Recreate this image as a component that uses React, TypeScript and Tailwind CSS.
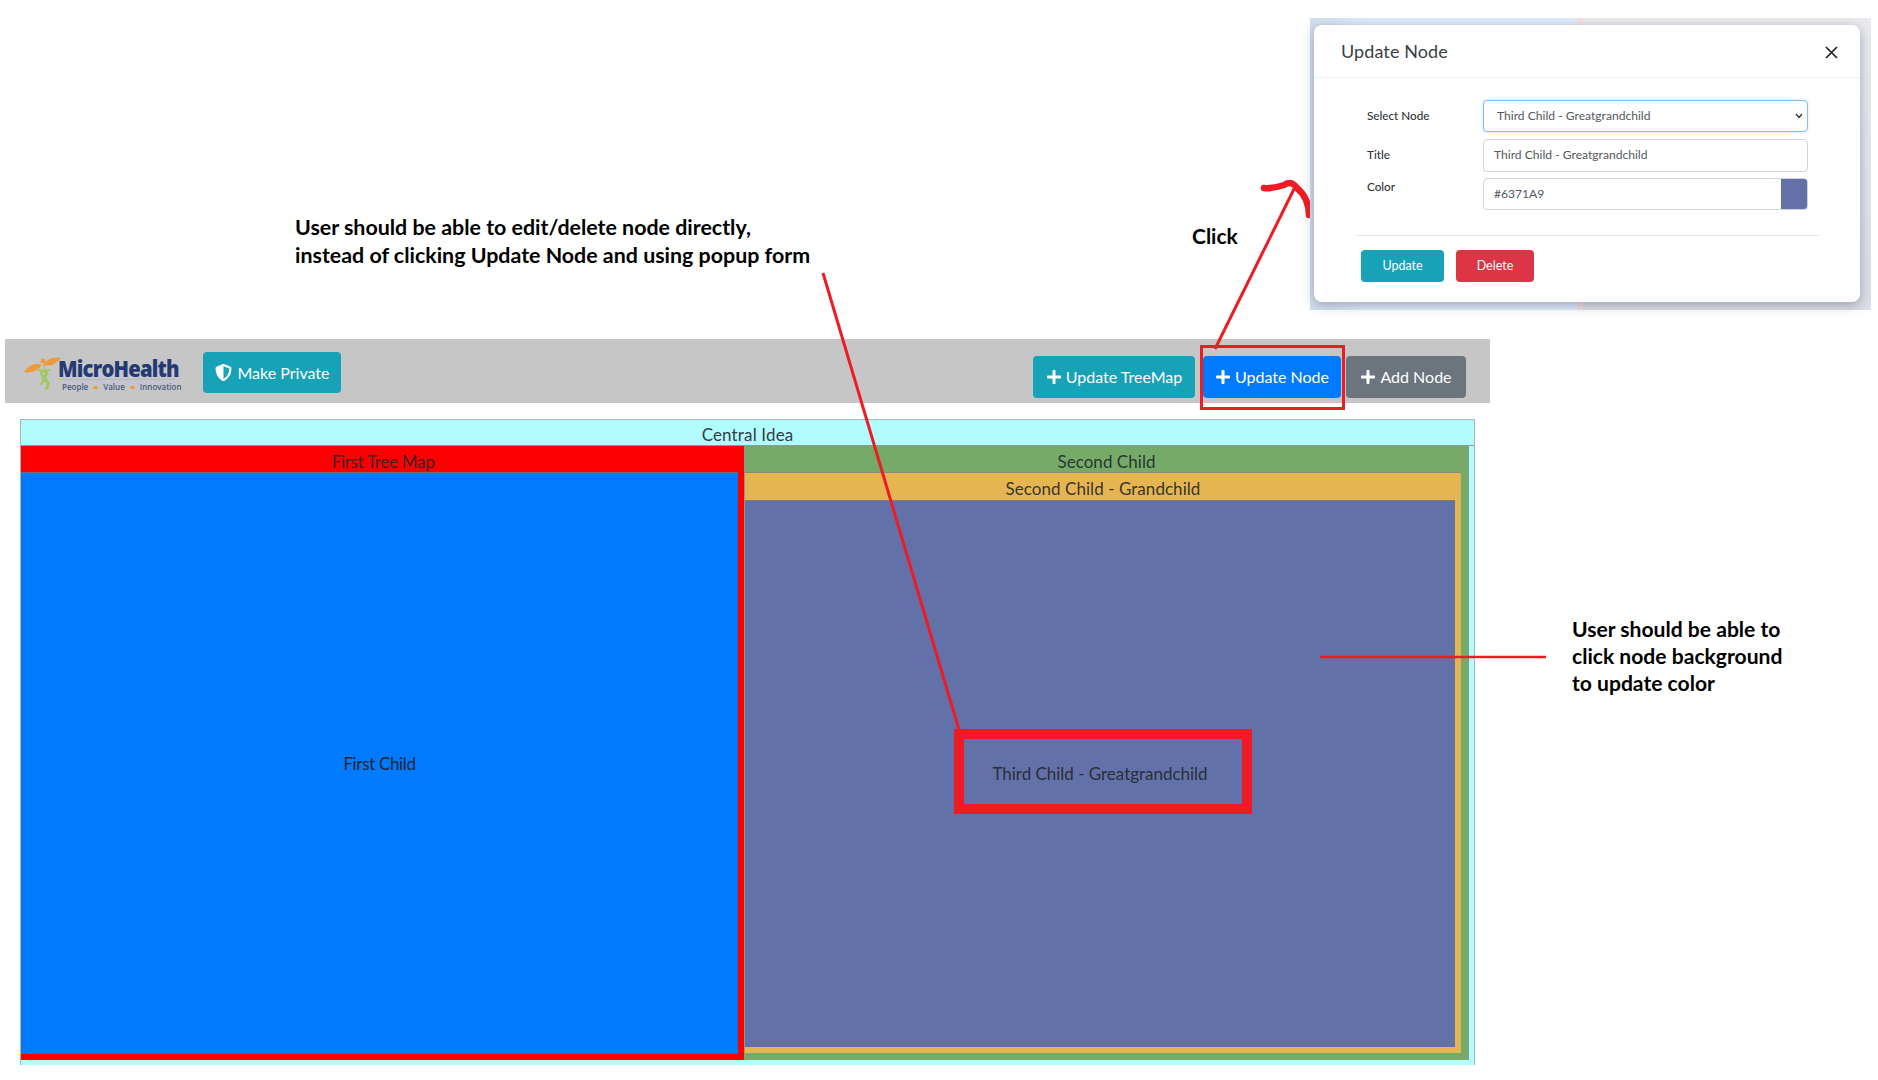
import React from "react";
import { FaPlus, FaShieldAlt } from "react-icons/fa";

const sans = "font-['Lato','Liberation_Sans',sans-serif]";

function NavButton({ color, width, children }: { color: string; width: string; children: string }) {
  return (
    <button className={`${color} ${width} h-[42px] rounded-[4px] text-white text-[16px] flex items-center justify-center gap-[4px]`}>
      <FaPlus className="w-[16px] h-[16px]" />
      <span>{children}</span>
    </button>
  );
}

function Logo() {
  return (
    <div className="w-[163px] h-[34px] mt-[17px] flex items-start">
      <svg width="40" height="34" viewBox="0 0 40 34" className="shrink-0">
        <path d="M1 16 C7 8 13 7 19 9 C15 14 9 18 1 16Z" fill="#ec9a3c" />
        <path d="M20 9 C24 3 31 0 38 2 C33 8 27 11 20 9Z" fill="#ec9a3c" />
        <circle cx="20" cy="5" r="2.4" fill="#ec9a3c" />
        <path d="M21 9 L25 33" stroke="#9cc95a" strokeWidth="1.4" />
        <path d="M15 14 C25 15 27 18 20 21 C16 24 27 25 26 28 C25 31 22 31 23 34" fill="none" stroke="#9cc95a" strokeWidth="2" />
        <path d="M27 14 C17 15 15 18 22 21 C27 24 17 25 18 29" fill="none" stroke="#9cc95a" strokeWidth="2" />
      </svg>
      <div className="-ml-[5px] mt-[2px] flex flex-col items-start leading-none">
        <span className="font-['Open_Sans',sans-serif] font-extrabold text-[23.5px] leading-[20px] tracking-[-0.9px] text-[#233a74] scale-x-[.86] origin-left whitespace-nowrap">MicroHealth</span>
        <div className="w-[118px] h-px mt-[1px] bg-[#a9cf6a]" />
        <span className="font-['Open_Sans',sans-serif] font-semibold text-[8px] leading-[10px] mt-[2px] text-[#4c5a85] whitespace-nowrap pl-[4px] flex items-center gap-[5px]">
          People <i className="w-[5px] h-[3px] bg-[#ec9a3c] rounded-full" /> Value <i className="w-[5px] h-[3px] bg-[#ec9a3c] rounded-full" /> Innovation
        </span>
      </div>
    </div>
  );
}

function Title({ h, children, className = "" }: { h: string; children: string; className?: string }) {
  return <div className={`${h} shrink-0 flex items-center justify-center text-[17px] text-[#212529]/90 ${className}`}>{children}</div>;
}

export default function App() {
  return (
    <div className={`relative w-[1878px] h-[1080px] bg-white overflow-hidden pt-[339px] ${sans}`}>
      {/* Page under review */}
      <nav className="ml-[5px] w-[1485px] h-[64px] bg-[#c6c6c6] flex pl-[18px] pr-[24px]">
        <Logo />
        <button className="ml-[17px] mt-[13px] w-[138px] h-[41px] bg-[#17a2b8] rounded-[4px] text-white text-[16px] flex items-center justify-center gap-[6px]">
          <FaShieldAlt className="w-[17px] h-[19px]" />
          <span>Make Private</span>
        </button>
        <div className="ml-auto mt-[17px] flex">
          <NavButton color="bg-[#17a2b8]" width="w-[162px]">Update TreeMap</NavButton>
          <div className="ml-[8px] mr-[5px]">
            <NavButton color="bg-[#007bff]" width="w-[138px]">Update Node</NavButton>
          </div>
          <NavButton color="bg-[#6c757d]" width="w-[120px]">Add Node</NavButton>
        </div>
      </nav>

      <section className="ml-[20px] mt-[16px] w-[1455px] h-[646px] bg-[#b0fcff] border-l border-t border-r border-[#a9b4b5] flex flex-col">
        <Title h="h-[25px]" className="pt-[4px] tracking-[0.15px]">Central Idea</Title>
        <div className="flex h-[615px] border-t border-[#8a9a9b]">
          <div className="w-[723px] bg-[#fb0000] flex flex-col pr-[6px] pb-[6px]">
            <Title h="h-[26px]" className="pt-[5px] pl-[7px] -tracking-[0.3px]">First Tree Map</Title>
            <div className="flex-1 bg-[#007bff] border-t border-[#7a6a80] flex items-center justify-center -tracking-[0.35px] text-[17px] text-[#212529]">First Child</div>
          </div>
          <div className="w-[725px] bg-[#75aa69] flex flex-col pr-[7px] pb-[7px] border-l border-r border-[#8a9a8b]">
            <Title h="h-[26px]" className="pt-[5px] pl-[7px] tracking-[0.05px]">Second Child</Title>
            <div className="flex-1 bg-[#e5b552] flex flex-col pr-[6px] pb-[6px] border-t border-[#8a8a7b]">
              <Title h="h-[27px]" className="pt-[5px] pl-[6px] tracking-[0.05px]">Second Child - Grandchild</Title>
              <div className="flex-1 bg-[#6371a9] border-t border-[#7b7b80] flex items-center justify-center text-[17px] -tracking-[0.02px] text-[#212529]/90">Third Child - Greatgrandchild</div>
            </div>
          </div>
        </div>
      </section>

      {/* Annotations */}
      <svg className="absolute inset-0 pointer-events-none" width="1878" height="1080" viewBox="0 0 1878 1080" fill="none">
        <path d="M823 273 L960 733" stroke="#ed1c24" strokeWidth="3" />
        <path d="M1215 349 L1295 187" stroke="#ed1c24" strokeWidth="3" />
        <path d="M1320 657 H1546" stroke="#ed1c24" strokeWidth="2.5" />
        <rect x="1201.5" y="346.5" width="142" height="62" stroke="#ed1c24" strokeWidth="3" />
        <path d="M1264 188 C1272 189 1278 187 1284 185 C1291 181 1294 184 1297 188 C1304 194 1309 202 1309 215" stroke="#ed1c24" strokeWidth="6.5" strokeLinecap="round" />
      </svg>
      <div className="absolute left-[954px] top-[729px] w-[298px] h-[85px] border-[10px] border-[#ed1c24]" />

      <p className="absolute left-[295px] top-[213px] text-[21.4px] leading-[28px] font-bold text-black whitespace-nowrap">
        User should be able to edit/delete node directly,<br />instead of clicking Update Node and using popup form
      </p>
      <p className="absolute left-[1192px] top-[222px] text-[21px] leading-[28px] font-bold text-black">Click</p>
      <p className="absolute left-[1572px] top-[615px] text-[21.1px] leading-[27px] font-bold text-black whitespace-nowrap">
        User should be able to<br />click node background<br />to update color
      </p>

      {/* Update Node dialog */}
      <div className="absolute left-[1310px] top-[18px] w-[561px] h-[292px] flex bg-[#e8e9ee]">
        <div className="w-[268px] bg-[linear-gradient(90deg,#d3deec,#e0ebfa_20%,#e0ebfa)]" />
        <div className="w-[5px] bg-[#f6dfe0]" />
        <div className="flex-1 bg-[linear-gradient(180deg,#eaebef,#dcdee5)]" />
        <div className="absolute left-[4px] top-[7px] w-[546px] h-[277px] bg-white rounded-[8px] shadow-[0_3px_12px_rgba(70,85,110,0.45)]">
          <header className="h-[53px] flex items-center justify-between pl-[27px] pr-[21px] border-b border-[#eef0f2]">
            <h2 className="text-[18px] tracking-[0.1px] text-[#3a4046]">Update Node</h2>
            <svg className="mt-[3px]" width="15" height="15" viewBox="0 0 15 15" fill="none"><path d="M2 2 L13 13 M13 2 L2 13" stroke="#222" strokeWidth="1.7" /></svg>
          </header>
          <div className="pl-[53px] pr-[52px] pt-[22px] text-[12.1px]">
            <div className="flex items-center h-[32px]">
              <label className="w-[116px] font-medium text-[#30353a] text-[11.7px]">Select Node</label>
              <div className="relative flex-1 h-full rounded-[4px] border border-[#80bdff] shadow-[0_0_2px_rgba(0,123,255,0.3)] flex items-center pl-[13px] text-[#52585e]">
                Third Child - Greatgrandchild
                <svg className="absolute right-[3px] top-[11px]" width="10" height="8" viewBox="0 0 10 8" fill="none"><path d="M2 2 L5 5.5 L8 2" stroke="#333" strokeWidth="1.4" /></svg>
              </div>
            </div>
            <div className="flex items-center h-[33px] mt-[7px]">
              <label className="w-[116px] font-medium text-[#30353a] text-[11.7px] -mt-[1px]">Title</label>
              <div className="flex-1 h-full rounded-[4px] border border-[#ced4da] flex items-center pl-[10px] text-[#52585e]">Third Child - Greatgrandchild</div>
            </div>
            <div className="flex h-[32px] mt-[6px]">
              <label className="w-[116px] font-medium text-[#30353a] text-[11.7px]">Color</label>
              <div className="flex-1 h-full rounded-[4px] border border-[#ced4da] flex items-center pl-[10px] text-[#52585e] relative overflow-hidden">
                #6371A9
                <div className="absolute right-0 top-0 bottom-0 w-[26px] bg-[#6371a9]" />
              </div>
            </div>
          </div>
          <div className="ml-[41px] mr-[40px] mt-[25px] h-px bg-[#e3e5e8]" />
          <div className="flex gap-[12px] ml-[47px] mt-[14px]">
            <button className="w-[83px] h-[32px] rounded-[4px] bg-[#17a2b8] text-white text-[12.5px]">Update</button>
            <button className="w-[78px] h-[32px] rounded-[4px] bg-[#dc3545] text-white text-[12.5px]">Delete</button>
          </div>
        </div>
      </div>
    </div>
  );
}
